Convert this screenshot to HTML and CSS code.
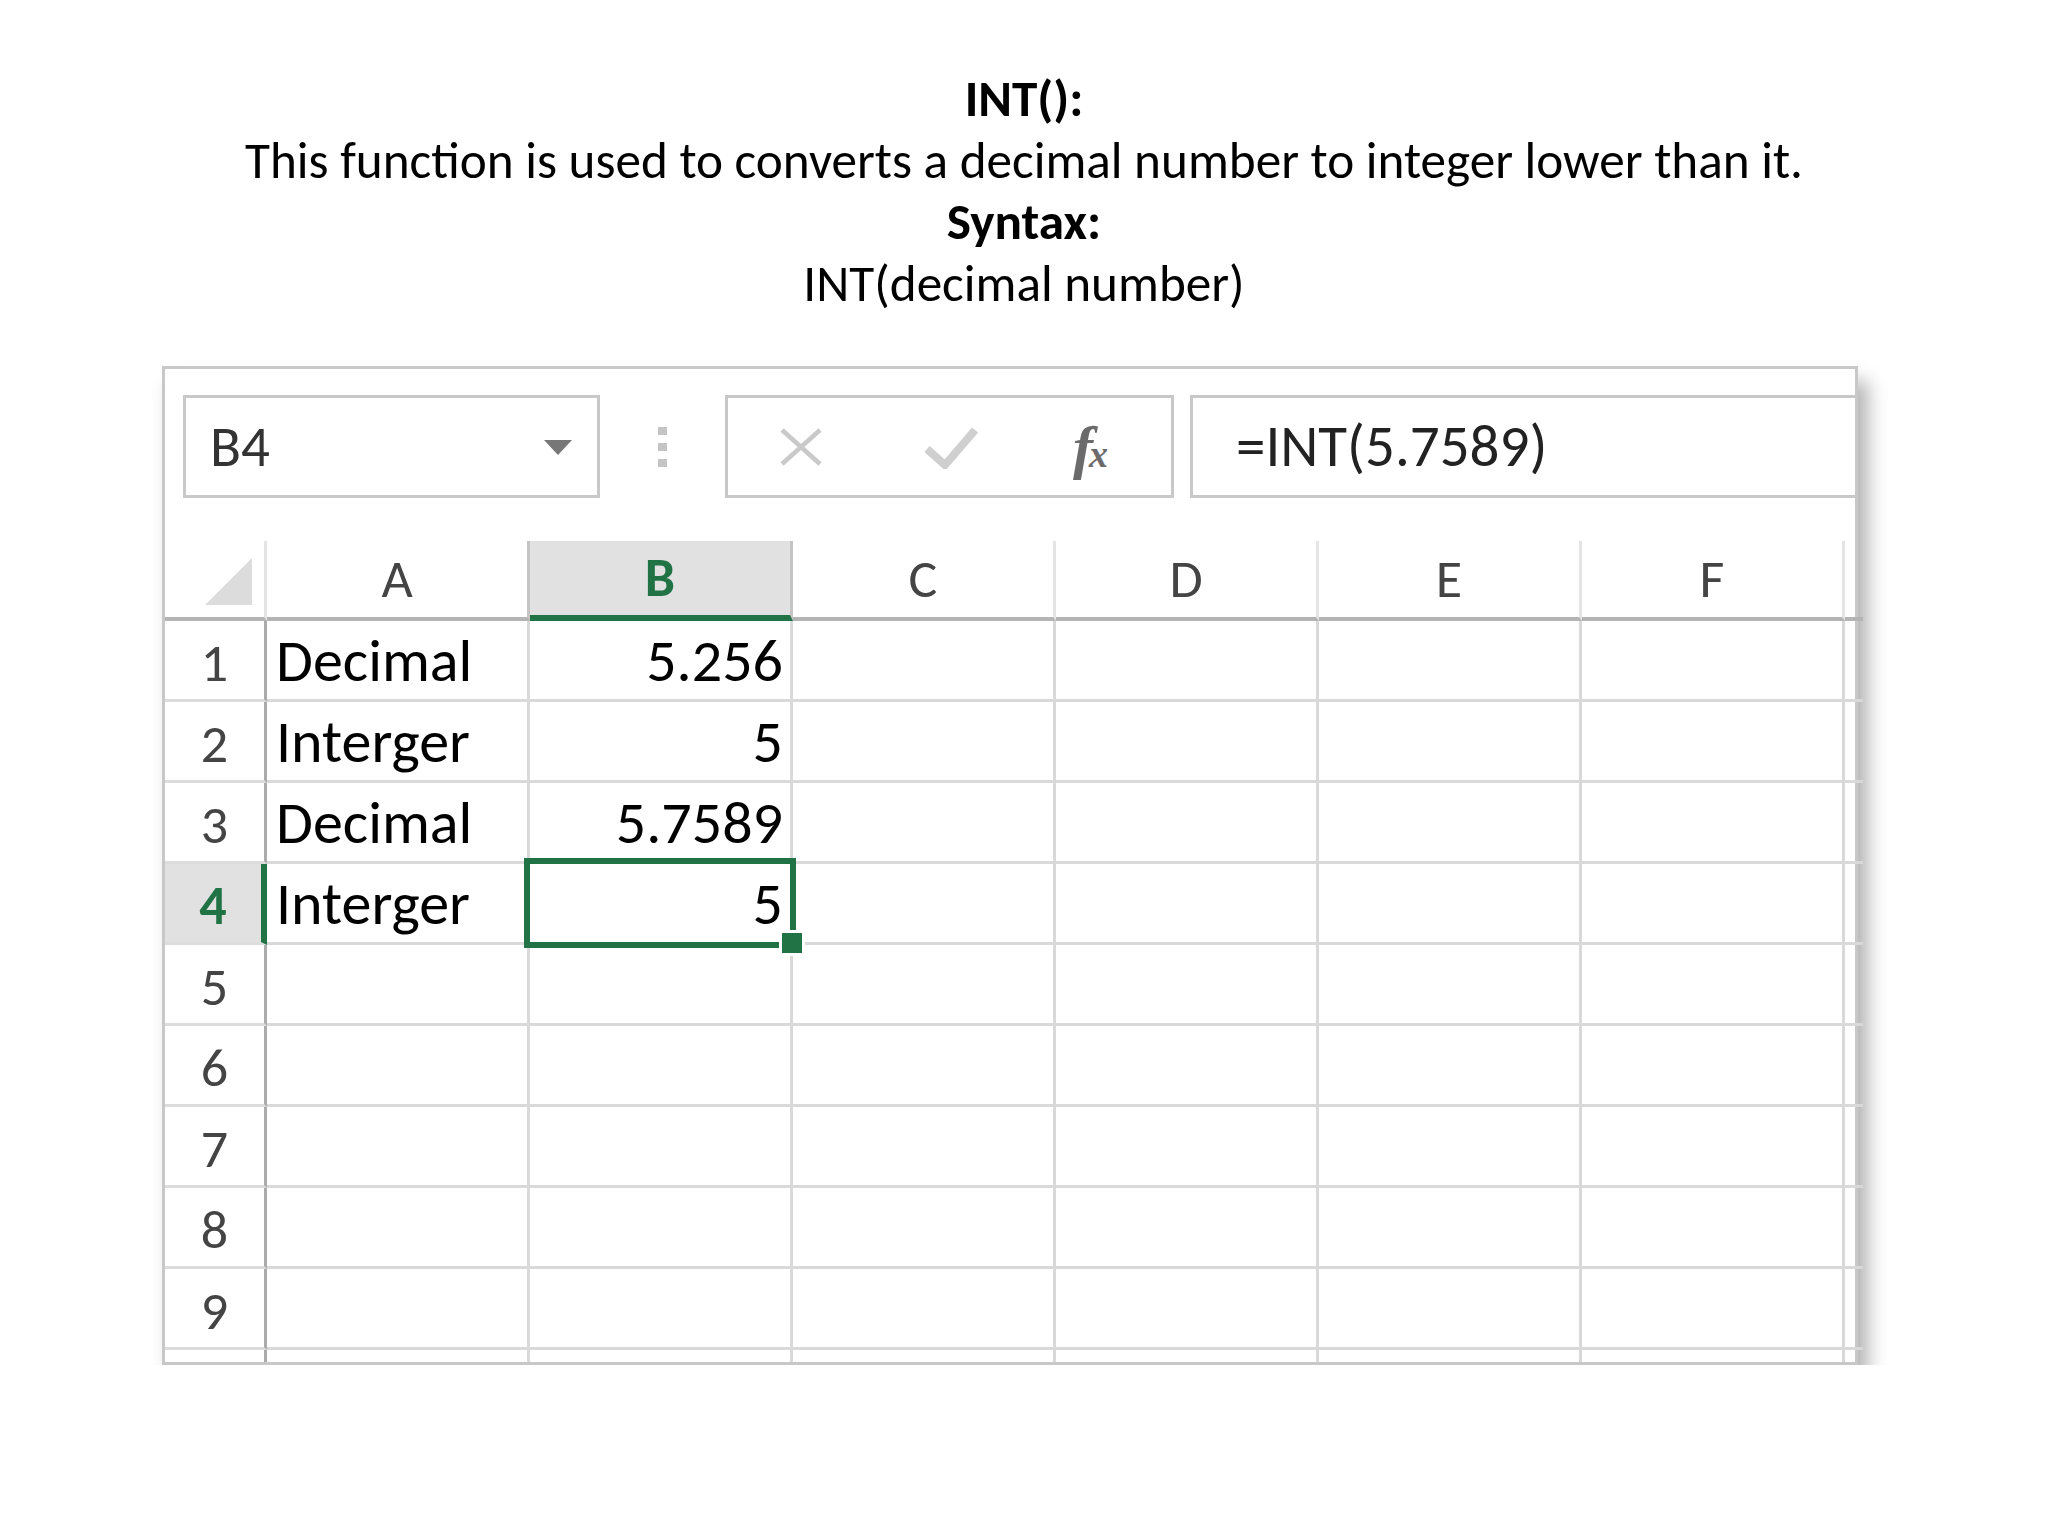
FILE: index.html
```html
<!DOCTYPE html>
<html lang="en">
<head>
<meta charset="utf-8">
<title>INT()</title>
<link rel="stylesheet" href="styles.css">
</head>
<body>
<div class="intro">
  <p class="b">INT():</p>
  <p>This function is used to converts a decimal number to integer lower than it.</p>
  <p class="b">Syntax:</p>
  <p>INT(decimal number)</p>
</div>

<div class="sheet">
  <div class="toolbar">
    <div class="namebox"><span>B4</span><span class="caret"></span></div>
    <div class="grip"><i></i><i></i><i></i></div>
    <div class="buttons">
      <svg class="ic-x" width="44" height="40" viewBox="0 0 44 40"><path d="M3 3 L41 37 M41 3 L3 37" stroke="#c9c9c9" stroke-width="4.5" fill="none"/></svg>
      <svg class="ic-ok" width="54" height="44" viewBox="0 0 54 44"><path d="M3 24 L21 40 L51 5" stroke="#cfcfcf" stroke-width="8" fill="none"/></svg>
      <span class="fx"><span class="f">f</span><span class="x">x</span></span>
    </div>
    <div class="formula">=INT(5.7589)</div>
  </div>

  <div class="grid">
    <div class="corner"><span class="tri"></span></div>
    <div class="ch pre">A</div>
    <div class="ch sel">B</div>
    <div class="ch">C</div>
    <div class="ch">D</div>
    <div class="ch">E</div>
    <div class="ch">F</div>
    <div class="ch end"></div>

    <div class="rh">1</div><div class="c">Decimal</div><div class="c num">5.256</div><div class="c"></div><div class="c"></div><div class="c"></div><div class="c"></div><div class="c end"></div>
    <div class="rh">2</div><div class="c">Interger</div><div class="c num">5</div><div class="c"></div><div class="c"></div><div class="c"></div><div class="c"></div><div class="c end"></div>
    <div class="rh">3</div><div class="c">Decimal</div><div class="c num">5.7589</div><div class="c"></div><div class="c"></div><div class="c"></div><div class="c"></div><div class="c end"></div>
    <div class="rh sel">4</div><div class="c">Interger</div><div class="c num">5</div><div class="c"></div><div class="c"></div><div class="c"></div><div class="c"></div><div class="c end"></div>
    <div class="rh">5</div><div class="c"></div><div class="c"></div><div class="c"></div><div class="c"></div><div class="c"></div><div class="c"></div><div class="c end"></div>
    <div class="rh">6</div><div class="c"></div><div class="c"></div><div class="c"></div><div class="c"></div><div class="c"></div><div class="c"></div><div class="c end"></div>
    <div class="rh">7</div><div class="c"></div><div class="c"></div><div class="c"></div><div class="c"></div><div class="c"></div><div class="c"></div><div class="c end"></div>
    <div class="rh">8</div><div class="c"></div><div class="c"></div><div class="c"></div><div class="c"></div><div class="c"></div><div class="c"></div><div class="c end"></div>
    <div class="rh">9</div><div class="c"></div><div class="c"></div><div class="c"></div><div class="c"></div><div class="c"></div><div class="c"></div><div class="c end"></div>

    <div class="rh last"></div><div class="c last"></div><div class="c last"></div><div class="c last"></div><div class="c last"></div><div class="c last"></div><div class="c last"></div><div class="c last end"></div>

    <div class="selbox"></div>
    <div class="handle"></div>
  </div>
</div>
</body>
</html>
```

FILE: styles.css
```css
html, body {
  margin: 0;
  padding: 0;
  background: #ffffff;
}

body {
  font-family: "Carlito", "Calibri", "Open Sans", sans-serif;
  color: #000;
}

.intro {
  padding-top: 68px;
  text-align: center;
  font-size: 51.2px;
  line-height: 61.5px;
}

.intro p {
  margin: 0;
}

.intro .b {
  font-weight: 700;
}

.sheet {
  margin: 52px 0 0 162px;
  width: 1696px;
  box-sizing: border-box;
  border: 3px solid #c8c8c8;
  background: #fff;
  box-shadow: 10px 15px 18px rgba(0, 0, 0, 0.3);
}

/* ---------- formula bar ---------- */
.toolbar {
  display: flex;
  margin-top: 26px;
  padding-left: 18px;
  height: 103px;
}

.namebox {
  width: 417px;
  box-sizing: border-box;
  border: 3px solid #c8c8c8;
  display: flex;
  align-items: center;
  justify-content: space-between;
  padding: 0 25px 0 24px;
  font-size: 57px;
  color: #333;
}

.caret {
  width: 0;
  height: 0;
  border-left: 14px solid transparent;
  border-right: 14px solid transparent;
  border-top: 15px solid #777;
  margin-top: 2px;
}

.grip {
  width: 9px;
  margin: 0 58px;
  display: flex;
  flex-direction: column;
  justify-content: center;
  gap: 8px;
}

.grip i {
  display: block;
  width: 9px;
  height: 8px;
  background: #c4c4c4;
}

.buttons {
  width: 449px;
  box-sizing: border-box;
  border: 3px solid #c8c8c8;
  display: flex;
  align-items: center;
  padding-left: 51px;
}

.ic-ok {
  margin-left: 101px;
}

.fx {
  margin-left: 95px;
  font-family: "Liberation Serif", serif;
  font-style: italic;
  font-weight: 700;
  color: #6b6b6b;
  display: flex;
  align-items: baseline;
  line-height: 1;
}

.fx .f {
  font-size: 60px;
}

.fx .x {
  font-size: 38px;
  margin-left: -4px;
}

.formula {
  flex: 1;
  margin-left: 16px;
  border: 3px solid #c8c8c8;
  border-right: 0;
  padding-left: 43px;
  font-size: 59px;
  line-height: 97px;
  color: #222;
  white-space: nowrap;
}

/* ---------- grid ---------- */
.grid {
  position: relative;
  margin-top: 43px;
  display: grid;
  grid-template-columns: 102px repeat(6, 263px) 1fr;
  grid-template-rows: 80px repeat(9, 81px) 12px;
}

.grid > div {
  box-sizing: border-box;
}

.corner {
  border-right: 3px solid #e4e4e4;
  border-bottom: 4px solid #b4b4b4;
  display: flex;
  justify-content: flex-end;
  align-items: flex-end;
  padding: 0 12px 12px 0;
}

.tri {
  width: 0;
  height: 0;
  border-left: 47px solid transparent;
  border-bottom: 47px solid #dcdcdc;
}

.ch {
  border-right: 3px solid #e4e4e4;
  border-bottom: 4px solid #b4b4b4;
  text-align: center;
  font-size: 54px;
  line-height: 76px;
  color: #444;
}

.ch.pre {
  border-right-color: #c4c4c4;
}

.ch.sel {
  background: #e1e1e1;
  color: #217346;
  font-weight: 700;
  border-right-color: #c4c4c4;
  border-bottom: 6px solid #217346;
  line-height: 74px;
}

.ch.end {
  border-right: 0;
}

.rh {
  border-right: 3px solid #ababab;
  border-bottom: 3px solid #dcdcdc;
  text-align: center;
  font-size: 54px;
  color: #444;
  padding-top: 6px;
  line-height: 72px;
}

.rh.sel {
  background: #e1e1e1;
  color: #217346;
  font-weight: 700;
  border-right: 6px solid #217346;
}

.c {
  border-right: 3px solid #d9d9d9;
  border-bottom: 3px solid #d9d9d9;
  font-size: 60px;
  padding: 2px 9px 0;
  line-height: 76px;
  white-space: nowrap;
  color: #000;
}

.c.num {
  text-align: right;
  padding-right: 7px;
}

.c.end {
  border-right: 0;
}

.grid > .last {
  border-bottom: 0;
}

.selbox {
  position: absolute;
  left: 359px;
  top: 317px;
  width: 272px;
  height: 90px;
  border: 6px solid #217346;
}

.handle {
  position: absolute;
  left: 614px;
  top: 389px;
  width: 26px;
  height: 26px;
  background: #217346;
  border: 3px solid #fff;
}
```
